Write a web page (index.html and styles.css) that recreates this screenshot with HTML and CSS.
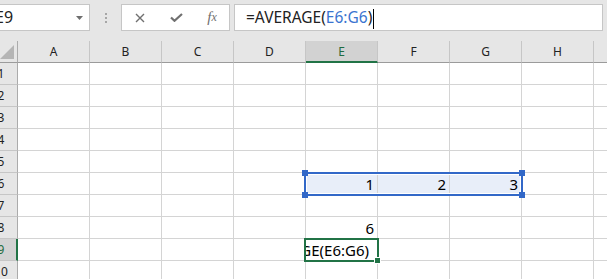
FILE: index.html
```html
<!DOCTYPE html>
<html>
<head>
<meta charset="utf-8">
<link rel="stylesheet" href="styles.css">
</head>
<body>
<div class="fbar">
  <div class="namebox"><span>E9</span><svg class="arrow" width="7" height="4" viewBox="0 0 7 4"><polygon points="0,0 7,0 3.5,4" fill="#6e6e6e"/></svg></div>
  <div class="grip"><i></i><i></i><i></i></div>
  <div class="btns">
    <span class="btn"><svg width="10" height="10" viewBox="0 0 10 10"><path d="M1 1 L9 9 M9 1 L1 9" stroke="#707070" stroke-width="1.4" fill="none"/></svg></span>
    <span class="btn"><svg width="13" height="9" viewBox="0 0 13 9"><polyline points="1,4.5 4.5,7.8 12,1" stroke="#707070" stroke-width="2.2" fill="none"/></svg></span>
    <span class="btn fx">f<small>x</small></span>
  </div>
  <div class="formula">=AVERAGE(<span class="ref">E6:G6</span>)<span class="caret"></span></div>
</div>
<div class="sheet">
  <div class="corner"><svg width="17" height="21" viewBox="0 0 17 21"><polygon points="14,4 14,18 0,18" fill="#b5b5b5"/></svg></div>
  <div class="ch">A</div><div class="ch">B</div><div class="ch">C</div><div class="ch">D</div><div class="ch on">E</div><div class="ch">F</div><div class="ch">G</div><div class="ch">H</div><div class="ch"></div>

  <div class="rh"><span>1</span></div><div class="c"></div><div class="c"></div><div class="c"></div><div class="c"></div><div class="c"></div><div class="c"></div><div class="c"></div><div class="c"></div><div class="c"></div>
  <div class="rh"><span>2</span></div><div class="c"></div><div class="c"></div><div class="c"></div><div class="c"></div><div class="c"></div><div class="c"></div><div class="c"></div><div class="c"></div><div class="c"></div>
  <div class="rh"><span>3</span></div><div class="c"></div><div class="c"></div><div class="c"></div><div class="c"></div><div class="c"></div><div class="c"></div><div class="c"></div><div class="c"></div><div class="c"></div>
  <div class="rh"><span>4</span></div><div class="c"></div><div class="c"></div><div class="c"></div><div class="c"></div><div class="c"></div><div class="c"></div><div class="c"></div><div class="c"></div><div class="c"></div>
  <div class="rh"><span>5</span></div><div class="c"></div><div class="c"></div><div class="c"></div><div class="c"></div><div class="c"></div><div class="c"></div><div class="c"></div><div class="c"></div><div class="c"></div>
  <div class="rh"><span>6</span></div><div class="c"></div><div class="c"></div><div class="c"></div><div class="c"></div><div class="c hl">1</div><div class="c hl">2</div><div class="c hl">3</div><div class="c"></div><div class="c"></div>
  <div class="rh"><span>7</span></div><div class="c"></div><div class="c"></div><div class="c"></div><div class="c"></div><div class="c"></div><div class="c"></div><div class="c"></div><div class="c"></div><div class="c"></div>
  <div class="rh"><span>8</span></div><div class="c"></div><div class="c"></div><div class="c"></div><div class="c"></div><div class="c">6</div><div class="c"></div><div class="c"></div><div class="c"></div><div class="c"></div>
  <div class="rh on"><span>9</span></div><div class="c"></div><div class="c"></div><div class="c"></div><div class="c"></div><div class="c edit">=AVERAGE(E6:G6)</div><div class="c"></div><div class="c"></div><div class="c"></div><div class="c"></div>
  <div class="rh"><span>10</span></div><div class="c"></div><div class="c"></div><div class="c"></div><div class="c"></div><div class="c"></div><div class="c"></div><div class="c"></div><div class="c"></div><div class="c"></div>

  <div class="range"><i class="tl"></i><i class="tr"></i><i class="bl"></i><i class="br"></i></div>
  <div class="active"><i class="fill"></i></div>
</div>
</body>
</html>
```

FILE: styles.css
```css
* { box-sizing: border-box; }
html, body { margin: 0; padding: 0; }
body {
  width: 607px;
  height: 279px;
  overflow: hidden;
  background: #fff;
  font-family: "Noto Sans", "Open Sans", sans-serif;
  color: #222;
}

.fbar {
  display: flex;
  align-items: flex-start;
  height: 41px;
  padding-top: 4px;
  background: #e6e6e6;
}
.namebox {
  flex: none;
  display: flex;
  align-items: center;
  justify-content: space-between;
  width: 102px;
  height: 27px;
  margin-left: -12px;
  padding: 0 6px;
  background: #fff;
  border: 1px solid #c6c6c6;
  font-size: 16px;
  line-height: 25px;
  color: #222;
}
.grip {
  flex: none;
  width: 31px;
  height: 27px;
  display: flex;
  flex-direction: column;
  align-items: center;
  gap: 2px;
  padding-top: 9px;
}
.grip i {
  display: block;
  width: 2px;
  height: 2px;
  background: #a6a6a6;
}
.btns {
  flex: none;
  display: flex;
  align-items: center;
  width: 109px;
  height: 27px;
  background: #fff;
  border: 1px solid #c6c6c6;
}
.btn {
  flex: none;
  width: 36px;
  height: 25px;
  display: flex;
  align-items: center;
  justify-content: center;
}
.btn.fx {
  font-family: "Liberation Serif", serif;
  font-style: italic;
  font-size: 15px;
  color: #707070;
}
.btn.fx small { font-size: 12px; }
.formula {
  flex: 1;
  height: 27px;
  margin: 0 4px;
  padding-left: 11px;
  background: #fff;
  border: 1px solid #c6c6c6;
  font-size: 15.5px;
  line-height: 25px;
  white-space: nowrap;
  color: #222;
}
.formula .ref { color: #3a74d0; }
.caret {
  display: inline-block;
  width: 1px;
  height: 20px;
  margin-left: 1px;
  background: #000;
  vertical-align: middle;
}

.sheet {
  position: relative;
  display: grid;
  grid-template-columns: 18px repeat(9, 72px);
  grid-auto-rows: 22px;
}
.corner {
  background: #e6e6e6;
  border-right: 1px solid #ababab;
  border-bottom: 1px solid #9b9b9b;
  overflow: hidden;
}
.corner svg { display: block; }
.ch {
  display: flex;
  align-items: center;
  justify-content: center;
  background: #e6e6e6;
  border-right: 1px solid #c6c6c6;
  border-bottom: 1px solid #9b9b9b;
  font-size: 12px;
  color: #222;
}
.ch.on {
  background: #d2d2d2;
  border-bottom: 2px solid #217346;
  color: #1e6b40;
}
.rh {
  display: flex;
  align-items: center;
  overflow: hidden;
  background: #e6e6e6;
  border-right: 1px solid #ababab;
  border-bottom: 1px solid #c6c6c6;
  font-size: 12px;
  color: #222;
}
.rh span {
  flex: none;
  width: 30px;
  margin-left: -14px;
  text-align: center;
}
.rh.on {
  background: #d2d2d2;
  border-right: 2px solid #217346;
  color: #1e6b40;
}
.c {
  display: flex;
  align-items: flex-end;
  justify-content: flex-end;
  overflow: hidden;
  white-space: nowrap;
  padding: 0 3px 1px 0;
  border-right: 1px solid #d4d4d4;
  border-bottom: 1px solid #d4d4d4;
  font-size: 15px;
  line-height: 18px;
  color: #000;
}
.c.hl { background: #e8eef9; }
.c.edit { padding-right: 8px; }

.range {
  position: absolute;
  left: 304px;
  top: 131px;
  width: 219px;
  height: 24px;
  border: 2px solid #3268c8;
  box-shadow: inset 0 0 0 1px #fff;
}
.range i {
  position: absolute;
  width: 6px;
  height: 6px;
  background: #3268c8;
}
.range .tl { left: -4px; top: -4px; }
.range .tr { right: -4px; top: -4px; }
.range .bl { left: -4px; bottom: -4px; }
.range .br { right: -4px; bottom: -4px; }

.active {
  position: absolute;
  left: 304px;
  top: 197px;
  width: 75px;
  height: 24px;
  border: 2px solid #217346;
}
.active .fill {
  position: absolute;
  right: -3px;
  bottom: -3px;
  width: 5px;
  height: 5px;
  background: #217346;
  box-shadow: 0 0 0 1px #fff;
}
```
